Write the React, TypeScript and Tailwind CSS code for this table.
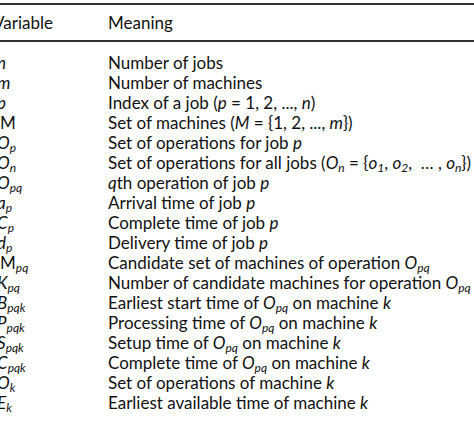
import React from "react";

const I = ({ children }: { children: React.ReactNode }) => <i className="italic">{children}</i>;
const S = ({ children }: { children: React.ReactNode }) => <sub className="italic text-[12px]">{children}</sub>;

const Opq = () => (
  <>
    <I>O</I>
    <S>pq</S>
  </>
);

const rows: [React.ReactNode, React.ReactNode][] = [
  [<I>n</I>, <>Number of jobs</>],
  [<I>m</I>, <>Number of machines</>],
  [<I>p</I>, <>Index of a job (<I>p</I> = 1, 2, ..., <I>n</I>)</>],
  [<span className="pl-[3px]">M</span>, <>Set of machines (<I>M</I> = {"{"}1, 2, ..., <I>m</I>{"}"})</>],
  [<><I>O</I><S>p</S></>, <>Set of operations for job <I>p</I></>],
  [<><I>O</I><S>n</S></>, <>Set of operations for all jobs (<I>O</I><S>n</S> = {"{"}<I>o</I><S>1</S>, <I>o</I><S>2</S>, &nbsp;…&nbsp;, <I>o</I><S>n</S>{"}"})</>],
  [<><I>O</I><S>pq</S></>, <><I>q</I>th operation of job <I>p</I></>],
  [<><I>a</I><S>p</S></>, <>Arrival time of job <I>p</I></>],
  [<><I>C</I><S>p</S></>, <>Complete time of job <I>p</I></>],
  [<><I>d</I><S>p</S></>, <>Delivery time of job <I>p</I></>],
  [<span className="pl-[3px]">M<S>pq</S></span>, <>Candidate set of machines of operation <Opq /></>],
  [<><I>K</I><S>pq</S></>, <>Number of candidate machines for operation <Opq /></>],
  [<><I>B</I><S>pqk</S></>, <>Earliest start time of <Opq /> on machine <I>k</I></>],
  [<><I>P</I><S>pqk</S></>, <>Processing time of <Opq /> on machine <I>k</I></>],
  [<><I>S</I><S>pqk</S></>, <>Setup time of <Opq /> on machine <I>k</I></>],
  [<><I>C</I><S>pqk</S></>, <>Complete time of <Opq /> on machine <I>k</I></>],
  [<><I>O</I><S>k</S></>, <>Set of operations of machine <I>k</I></>],
  [<><I>E</I><S>k</S></>, <>Earliest available time of machine <I>k</I></>],
];

export default function App() {
  return (
    <div
      className="w-[474px] h-[427px] overflow-hidden bg-white text-[#111] text-[17px]"
      style={{ fontFamily: "Lato, 'Open Sans', sans-serif" }}
    >
      <div className="pt-[3px]">
        <div className="h-[2px] bg-[#333]" />
        <div className="flex h-[35px] items-center">
          <div className="w-[115px] shrink-0 -ml-[7px]">Variable</div>
          <div>Meaning</div>
        </div>
        <div className="h-[2px] bg-[#333]" />
        <div className="pt-[11px] flex flex-col">
          {rows.map(([v, m], i) => (
            <div key={i} className="flex h-[20px] items-center whitespace-nowrap leading-[20px]">
              <div className="w-[111px] shrink-0 -ml-[3px]">{v}</div>
              <div>{m}</div>
            </div>
          ))}
        </div>
      </div>
    </div>
  );
}
